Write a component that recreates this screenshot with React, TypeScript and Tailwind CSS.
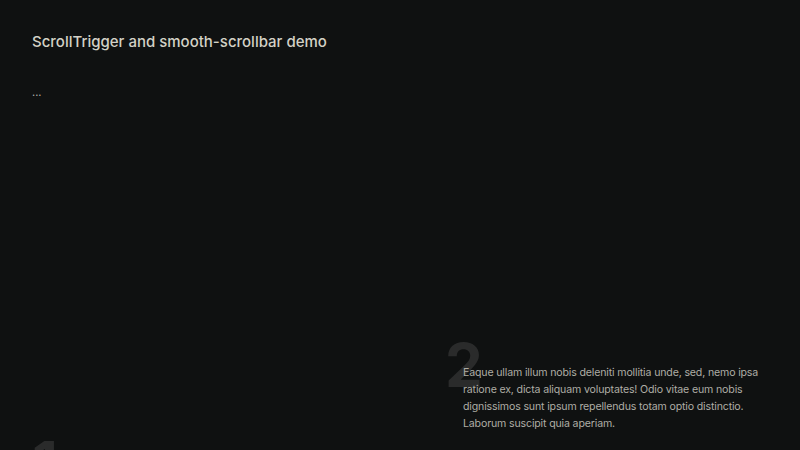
import React from 'react';

const items = [
  {
    n: '1',
    text: 'Lorem ipsum dolor sit amet consectetur adipisicing elit. Quibusdam, voluptatum. Nulla facilis, sequi maxime quaerat minima.',
  },
  {
    n: '2',
    text: 'Eaque ullam illum nobis deleniti mollitia unde, sed, nemo ipsa ratione ex, dicta aliquam voluptates! Odio vitae eum nobis dignissimos sunt ipsum repellendus totam optio distinctio. Laborum suscipit quia aperiam.',
  },
];

function Item({ n, text }: { n: string; text: string }) {
  return (
    <div className="relative">
      <span className="absolute left-0 top-0 text-[60px] leading-none font-bold text-[#2a2b2b] tracking-tight">
        {n}
      </span>
      <p className="relative pl-[18px] pt-[29px] w-[326px] text-[10.6px] leading-[17px] tracking-[-0.015em] text-[#aeada5]">
        {text}
      </p>
    </div>
  );
}

export default function App() {
  return (
    <div
      className="h-[450px] overflow-hidden bg-[#0f1111] px-8"
      style={{ fontFamily: 'Inter, "Noto Sans", sans-serif' }}
    >
      <header className="pt-[30px]">
        <h1 className="text-[15px] leading-6 font-medium text-[#d3d1c6]">
          ScrollTrigger and smooth-scrollbar demo
        </h1>
        <p className="mt-[30px] text-[11px] text-[#aeada5]">...</p>
      </header>

      <section className="mt-[234px] flex items-start">
        <div className="w-[413px] shrink-0 mt-[98px]">
          <Item {...items[0]} />
        </div>
        <div className="shrink-0">
          <Item {...items[1]} />
        </div>
      </section>
    </div>
  );
}
